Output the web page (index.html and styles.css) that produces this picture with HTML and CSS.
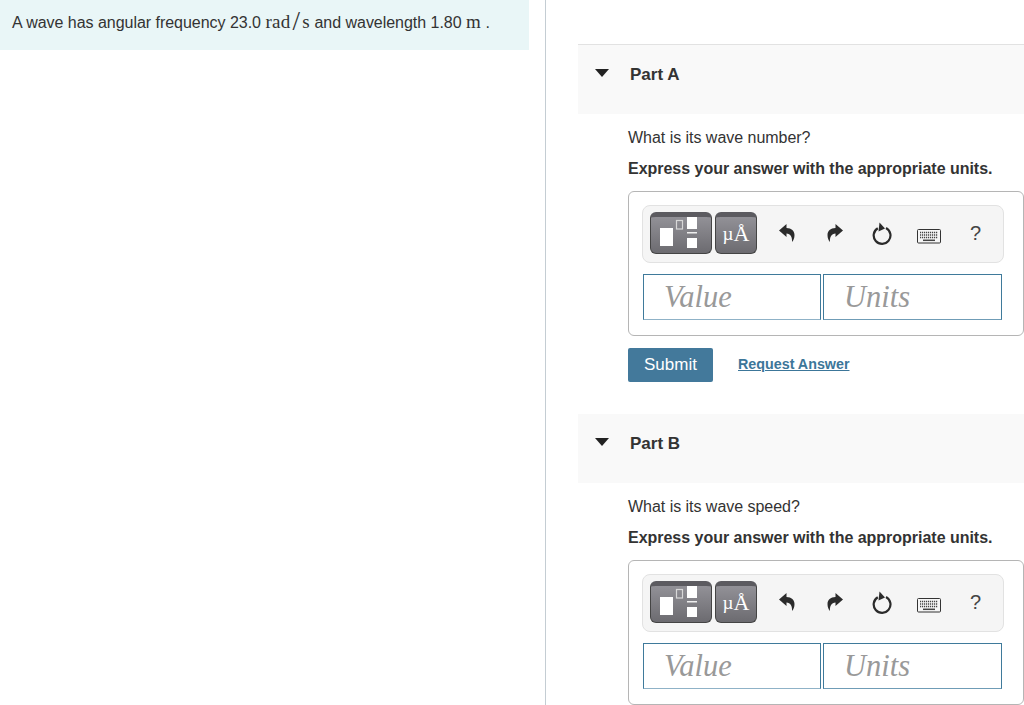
FILE: index.html
```html
<!DOCTYPE html>
<html>
<head>
  <title>Wave Problem</title>
  <link rel="stylesheet" href="styles.css">
</head>
<body>
  <svg class="icon-defs" width="0" height="0">
    <defs>
      <symbol id="undo" viewBox="0 0 18 20">
        <path d="M1 7.5 L8.5 1 V5 C13.5 5 16.5 8 16.5 12 C16.5 15 15.5 17.5 14 19 C14.5 14.5 12.5 10.5 8.5 10.5 V14 Z"/>
      </symbol>
      <symbol id="redo" viewBox="0 0 18 20">
        <path d="M17 7.5 L9.5 1 V5 C4.5 5 1.5 8 1.5 12 C1.5 15 2.5 17.5 4 19 C3.5 14.5 5.5 10.5 9.5 10.5 V14 Z"/>
      </symbol>
      <symbol id="reset" viewBox="0 0 22 24">
        <path class="reset-ring" d="M6.8 7.2 A8.4 8.4 0 1 0 15 7"/>
        <path d="M7.5 10.5 L8.5 1.5 L14 7.5 Z"/>
      </symbol>
      <symbol id="keyboard" viewBox="0 0 24 16">
        <rect class="kbd-body" x="0.5" y="1.5" width="23" height="13.5" rx="1"/>
        <path class="kbd-keys" d="M3 4.5 H21 M3 7 H21 M3 9.5 H21"/>
        <path class="kbd-space" d="M6 12.3 H18"/>
      </symbol>
      <symbol id="templates" viewBox="0 0 62 46">
        <rect x="10" y="16" width="13" height="18" fill="#fff"/>
        <rect class="small-box" x="26.5" y="8.5" width="6" height="8.5"/>
        <rect x="37" y="5" width="10" height="12" fill="#fff"/>
        <rect x="37" y="20" width="10" height="1.5" fill="#eee"/>
        <rect x="37" y="26" width="10" height="10" fill="#fff"/>
      </symbol>
    </defs>
  </svg>

  <div class="page">
    <div class="left-col">
      <div class="intro">
        A wave has angular frequency 23.0 <span class="math">rad<span class="slash">/</span>s</span> and wavelength 1.80 <span class="math">m</span> .
      </div>
    </div>

    <div class="right-col">
      <div class="part">
        <div class="part-head first">
          <span class="caret"></span>
          <span class="part-title">Part A</span>
        </div>
        <div class="part-body">
          <p class="question">What is its wave number?</p>
          <p class="instruction">Express your answer with the appropriate units.</p>
          <div class="answer-box">
            <div class="toolbar">
              <div class="tool-btn tool-wide"><svg class="tpl-icon"><use href="#templates"/></svg></div>
              <div class="tool-btn tool-units"><span class="mu">&micro;</span><span class="ang">&Aring;</span></div>
              <svg class="act act-undo"><use href="#undo"/></svg>
              <svg class="act act-redo"><use href="#redo"/></svg>
              <svg class="act act-reset"><use href="#reset"/></svg>
              <svg class="act act-kbd"><use href="#keyboard"/></svg>
              <span class="help">?</span>
            </div>
            <div class="inputs">
              <div class="field">Value</div>
              <div class="field">Units</div>
            </div>
          </div>
          <div class="actions">
            <button class="submit" type="button">Submit</button>
            <a class="request" href="#">Request Answer</a>
          </div>
        </div>
      </div>

      <div class="part">
        <div class="part-head">
          <span class="caret"></span>
          <span class="part-title">Part B</span>
        </div>
        <div class="part-body">
          <p class="question">What is its wave speed?</p>
          <p class="instruction">Express your answer with the appropriate units.</p>
          <div class="answer-box">
            <div class="toolbar">
              <div class="tool-btn tool-wide"><svg class="tpl-icon"><use href="#templates"/></svg></div>
              <div class="tool-btn tool-units"><span class="mu">&micro;</span><span class="ang">&Aring;</span></div>
              <svg class="act act-undo"><use href="#undo"/></svg>
              <svg class="act act-redo"><use href="#redo"/></svg>
              <svg class="act act-reset"><use href="#reset"/></svg>
              <svg class="act act-kbd"><use href="#keyboard"/></svg>
              <span class="help">?</span>
            </div>
            <div class="inputs">
              <div class="field">Value</div>
              <div class="field">Units</div>
            </div>
          </div>
        </div>
      </div>
    </div>
  </div>
</body>
</html>
```

FILE: styles.css
```css
html, body {
  height: 100%;
}

body {
  margin: 0;
  background-color: #FFFFFF;
  color: #333333;
  font-family: "Liberation Sans", Arial, sans-serif;
  font-size: 16px;
  overflow: hidden;
}

.icon-defs {
  display: block;
  height: 0;
}

.page {
  display: flex;
  height: 705px;
}

.left-col {
  width: 545px;
  height: 100%;
  border-right: 1px solid #C4CDD3;
  flex-shrink: 0;
}

.intro {
  width: 529px;
  height: 50px;
  box-sizing: border-box;
  padding: 12px 0 0 12px;
  background-color: #E9F6F7;
  line-height: 21px;
  letter-spacing: -0.03px;
  white-space: nowrap;
}

.math {
  font-family: "Liberation Serif", serif;
  font-size: 19px;
  line-height: 0;
  letter-spacing: 0.3px;
}

.slash {
  padding: 0 2px;
  font-size: 27px;
  line-height: 0;
  vertical-align: -2px;
}

.right-col {
  flex: 1;
  padding: 44px 0 0 32px;
}

.part-head {
  display: flex;
  align-items: center;
  height: 69px;
  padding-bottom: 11px;
  box-sizing: border-box;
  background-color: #F9F9F9;
}

.part-head.first {
  height: 70px;
  border-top: 1px solid #E2E2E2;
}

.caret {
  width: 0;
  height: 0;
  margin: 0 0 2px 17px;
  border-left: 7px solid transparent;
  border-right: 7px solid transparent;
  border-top: 8px solid #222222;
}

.part-title {
  margin-left: 21px;
  padding-top: 2px;
  font-weight: bold;
  font-size: 17px;
}

.part-body {
  padding: 14px 0 0 50px;
}

.question {
  margin: 0;
  line-height: 19px;
  letter-spacing: -0.03px;
}

.instruction {
  margin: 12px 0 13px;
  line-height: 19px;
  letter-spacing: -0.02px;
  font-weight: bold;
}

.answer-box {
  height: 145px;
  box-sizing: border-box;
  padding: 13px 19px 0 13px;
  border: 1px solid #B5B5B5;
  border-radius: 6px;
}

.toolbar {
  display: flex;
  align-items: center;
  height: 58px;
  box-sizing: border-box;
  padding: 0 0 2px 7px;
  border: 1px solid #E2E2E2;
  border-radius: 8px;
  background-color: #F5F5F5;
}

.tool-btn {
  height: 42px;
  box-sizing: border-box;
  border: 1px solid #444444;
  border-top: 5px solid #5C5B60;
  border-radius: 6px;
  background: linear-gradient(#929197, #6C6B70);
  color: #FFFFFF;
}

.tool-wide {
  width: 62px;
}

.tool-units {
  display: flex;
  align-items: flex-end;
  justify-content: center;
  width: 42px;
  margin-left: 3px;
  padding-bottom: 8px;
  font-family: "Liberation Serif", serif;
  font-size: 22px;
  line-height: 22px;
}

.mu {
  font-size: 19px;
}

.tpl-icon {
  display: block;
  width: 62px;
  height: 46px;
  margin: -5px 0 0 -1px;
}

.small-box {
  fill: none;
  stroke: #D8D8D8;
  stroke-width: 1.2;
}

.act {
  fill: #2B2B2B;
  flex-shrink: 0;
}

.act-undo {
  width: 18px;
  height: 20px;
  margin-left: 21px;
}

.act-redo {
  width: 18px;
  height: 20px;
  margin-left: 30px;
}

.act-reset {
  width: 22px;
  height: 24px;
  margin-left: 27px;
}

.reset-ring {
  fill: none;
  stroke: #2B2B2B;
  stroke-width: 2.2;
}

.act-kbd {
  width: 24px;
  height: 16px;
  margin-left: 24px;
  margin-top: 5px;
}

.kbd-body {
  fill: #F6F6F6;
  stroke: #333333;
}

.kbd-keys {
  fill: none;
  stroke: #444444;
  stroke-width: 1.5;
  stroke-dasharray: 1.2 0.8;
}

.kbd-space {
  stroke: #444444;
  stroke-width: 1.5;
}

.help {
  margin-left: 29px;
  font-size: 20px;
  color: #444444;
}

.inputs {
  display: flex;
  gap: 2px;
  margin: 11px 0 0 1px;
}

.field {
  width: 178px;
  height: 46px;
  box-sizing: border-box;
  padding-left: 20px;
  border: 1px solid #3F7A9B;
  border-bottom-color: #8FB2C7;
  color: #999999;
  font-family: "Liberation Serif", serif;
  font-style: italic;
  font-size: 30.5px;
  line-height: 44px;
}

.field + .field {
  width: 179px;
  border-bottom-color: #6F9CB6;
}

.actions {
  display: flex;
  align-items: center;
  margin-top: 12px;
}

.submit {
  width: 85px;
  height: 34px;
  padding: 0;
  border: none;
  border-radius: 2px;
  background-color: #43799B;
  color: #FFFFFF;
  font-family: "Liberation Sans", Arial, sans-serif;
  font-size: 17px;
}

.request {
  margin: 0 0 2px 25px;
  color: #3C7699;
  font-size: 14.3px;
  font-weight: bold;
}

.part + .part {
  margin-top: 32px;
}
```
